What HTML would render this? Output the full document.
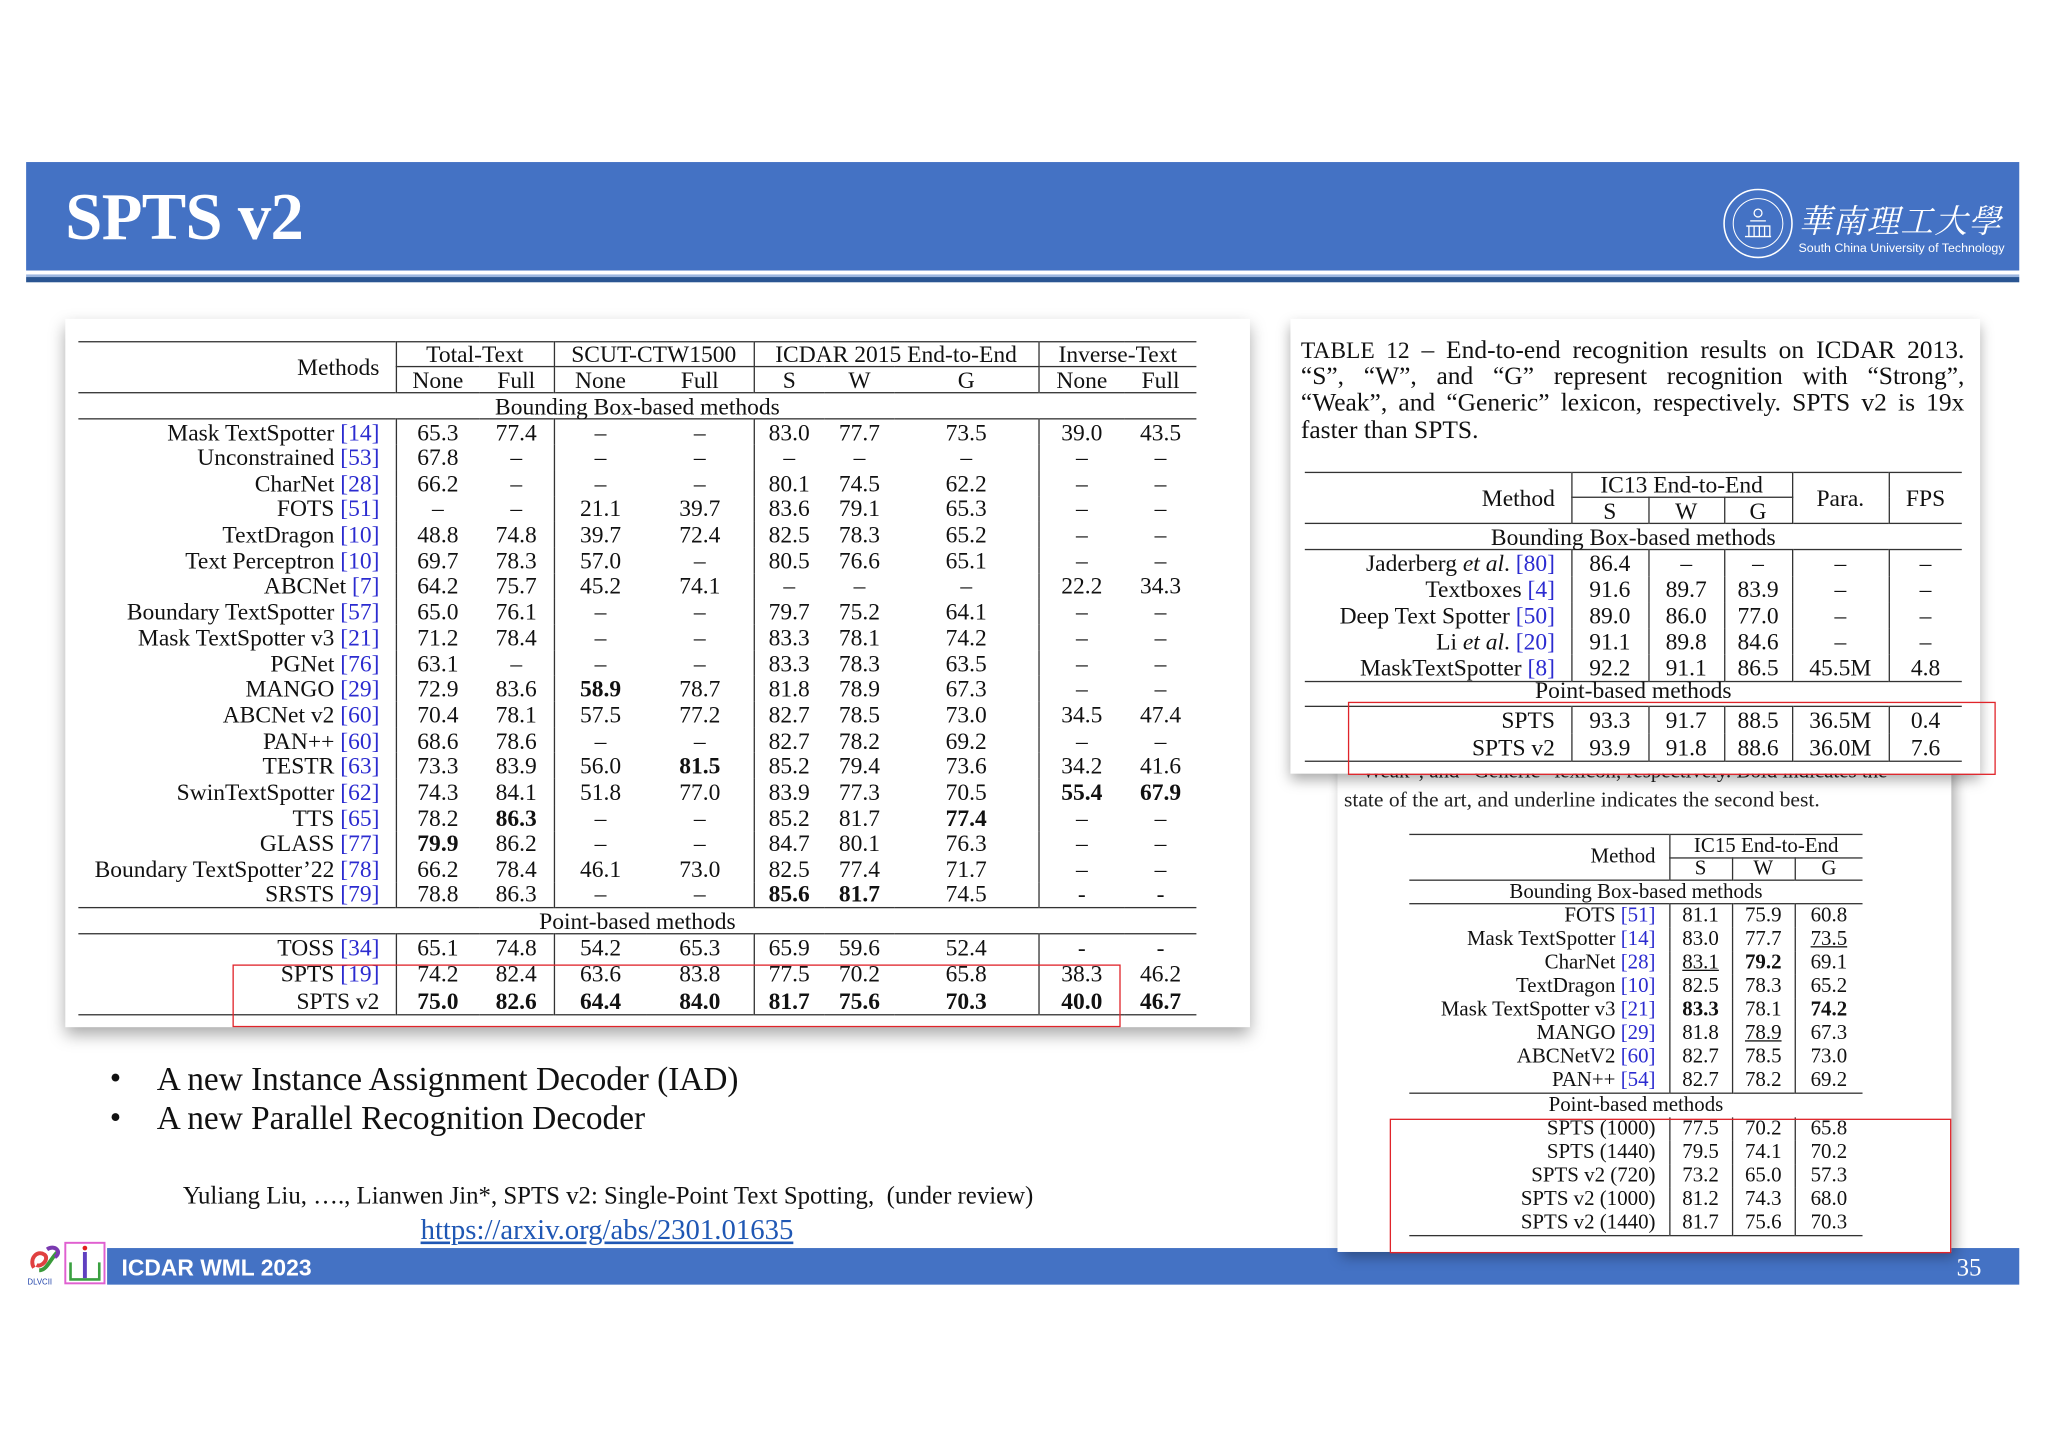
<!DOCTYPE html>
<html><head><meta charset="utf-8">
<style>
html,body{margin:0;padding:0;background:#fff;width:2048px;height:1448px;overflow:hidden}
#s{position:absolute;left:0;top:0;width:1568px;height:1108px;transform:scale(1.30612,1.30686);transform-origin:0 0;font-family:"Liberation Serif",serif;color:#111}
.a{position:absolute}
table{border-collapse:collapse;table-layout:fixed;position:absolute}
td{padding:0;text-align:center;white-space:nowrap;overflow:visible;line-height:1}
td.m{text-align:right;padding-right:12px}
.r{color:#2b2bd0}
.vl{border-right:1px solid #333}
.bt{border-top:1.5px solid #333}
.bb{border-bottom:1.5px solid #333}
.box{position:absolute;border:1.5px solid #e0242a;box-sizing:border-box}
b{font-weight:bold}
u{text-decoration:underline}
.jl{text-align:justify;text-align-last:justify;white-space:nowrap;height:20.5px}
</style></head><body>
<div id="s">
<!-- header -->
<div class="a" style="left:20px;top:124px;width:1526px;height:83px;background:#4472c4"></div>
<div class="a" style="left:20px;top:210px;width:1526px;height:2px;background:#9cb6e0"></div>
<div class="a" style="left:20px;top:212px;width:1526px;height:4px;background:#2a5592"></div>
<div class="a" style="left:50px;top:138px;font-size:51px;font-weight:bold;color:#fff;letter-spacing:-0.5px">SPTS v2</div>
<svg class="a" style="left:1318px;top:143px" width="56" height="56" viewBox="0 0 56 56"><circle cx="28" cy="28" r="26" fill="none" stroke="#fff" stroke-width="1.2"/><circle cx="28" cy="28" r="19" fill="none" stroke="#fff" stroke-width="0.8"/><path d="M18 38h20M19 30h18v8M21 30v8M25 30v8M29 30v8M33 30v8M22 26h12" stroke="#fff" stroke-width="1" fill="none"/><circle cx="28" cy="20" r="3" fill="none" stroke="#fff"/></svg>
<div class="a" style="left:1377px;top:150px;font-family:'Noto Serif CJK SC',serif;font-size:25px;color:#fff;letter-spacing:1px;font-style:italic;white-space:nowrap">華南理工大學</div>
<div class="a" style="left:1377px;top:185px;font-family:'Liberation Sans',sans-serif;font-size:9.5px;color:#fff">South China University of Technology</div>

<!-- left panel -->
<div class="a" style="left:50px;top:244px;width:907px;height:542px;background:#fff;box-shadow:0 6px 12px rgba(0,0,0,0.35)"></div>
<table style="left:60px;top:261px;width:856px;font-size:18px">
<colgroup><col style="width:243px"><col style="width:64px"><col style="width:57px"><col style="width:71px"><col style="width:82px"><col style="width:54px"><col style="width:54px"><col style="width:110px"><col style="width:66px"><col style="width:55px"></colgroup>
<tr class="bt" style="height:19px"><td class="m vl" rowspan="2">Methods</td><td colspan="2" class="vl bb" style="border-bottom-width:1px">Total-Text</td><td colspan="2" class="vl bb" style="border-bottom-width:1px">SCUT-CTW1500</td><td colspan="3" class="vl bb" style="border-bottom-width:1px">ICDAR 2015 End-to-End</td><td colspan="2" class="bb" style="border-bottom-width:1px">Inverse-Text</td></tr>
<tr style="height:20px"><td>None</td><td class="vl">Full</td><td>None</td><td class="vl">Full</td><td>S</td><td>W</td><td class="vl">G</td><td>None</td><td>Full</td></tr>
<tr class="bt bb" style="height:20px"><td colspan="10">Bounding Box-based methods</td></tr>
<tr style="height:19.7px"><td class="m vl">Mask TextSpotter <span class="r">[14]</span></td><td>65.3</td><td class="vl">77.4</td><td>–</td><td class="vl">–</td><td>83.0</td><td>77.7</td><td class="vl">73.5</td><td>39.0</td><td>43.5</td></tr>
<tr style="height:19.7px"><td class="m vl">Unconstrained <span class="r">[53]</span></td><td>67.8</td><td class="vl">–</td><td>–</td><td class="vl">–</td><td>–</td><td>–</td><td class="vl">–</td><td>–</td><td>–</td></tr>
<tr style="height:19.7px"><td class="m vl">CharNet <span class="r">[28]</span></td><td>66.2</td><td class="vl">–</td><td>–</td><td class="vl">–</td><td>80.1</td><td>74.5</td><td class="vl">62.2</td><td>–</td><td>–</td></tr>
<tr style="height:19.7px"><td class="m vl">FOTS <span class="r">[51]</span></td><td>–</td><td class="vl">–</td><td>21.1</td><td class="vl">39.7</td><td>83.6</td><td>79.1</td><td class="vl">65.3</td><td>–</td><td>–</td></tr>
<tr style="height:19.7px"><td class="m vl">TextDragon <span class="r">[10]</span></td><td>48.8</td><td class="vl">74.8</td><td>39.7</td><td class="vl">72.4</td><td>82.5</td><td>78.3</td><td class="vl">65.2</td><td>–</td><td>–</td></tr>
<tr style="height:19.7px"><td class="m vl">Text Perceptron <span class="r">[10]</span></td><td>69.7</td><td class="vl">78.3</td><td>57.0</td><td class="vl">–</td><td>80.5</td><td>76.6</td><td class="vl">65.1</td><td>–</td><td>–</td></tr>
<tr style="height:19.7px"><td class="m vl">ABCNet <span class="r">[7]</span></td><td>64.2</td><td class="vl">75.7</td><td>45.2</td><td class="vl">74.1</td><td>–</td><td>–</td><td class="vl">–</td><td>22.2</td><td>34.3</td></tr>
<tr style="height:19.7px"><td class="m vl">Boundary TextSpotter <span class="r">[57]</span></td><td>65.0</td><td class="vl">76.1</td><td>–</td><td class="vl">–</td><td>79.7</td><td>75.2</td><td class="vl">64.1</td><td>–</td><td>–</td></tr>
<tr style="height:19.7px"><td class="m vl">Mask TextSpotter v3 <span class="r">[21]</span></td><td>71.2</td><td class="vl">78.4</td><td>–</td><td class="vl">–</td><td>83.3</td><td>78.1</td><td class="vl">74.2</td><td>–</td><td>–</td></tr>
<tr style="height:19.7px"><td class="m vl">PGNet <span class="r">[76]</span></td><td>63.1</td><td class="vl">–</td><td>–</td><td class="vl">–</td><td>83.3</td><td>78.3</td><td class="vl">63.5</td><td>–</td><td>–</td></tr>
<tr style="height:19.7px"><td class="m vl">MANGO <span class="r">[29]</span></td><td>72.9</td><td class="vl">83.6</td><td><b>58.9</b></td><td class="vl">78.7</td><td>81.8</td><td>78.9</td><td class="vl">67.3</td><td>–</td><td>–</td></tr>
<tr style="height:19.7px"><td class="m vl">ABCNet v2 <span class="r">[60]</span></td><td>70.4</td><td class="vl">78.1</td><td>57.5</td><td class="vl">77.2</td><td>82.7</td><td>78.5</td><td class="vl">73.0</td><td>34.5</td><td>47.4</td></tr>
<tr style="height:19.7px"><td class="m vl">PAN++ <span class="r">[60]</span></td><td>68.6</td><td class="vl">78.6</td><td>–</td><td class="vl">–</td><td>82.7</td><td>78.2</td><td class="vl">69.2</td><td>–</td><td>–</td></tr>
<tr style="height:19.7px"><td class="m vl">TESTR <span class="r">[63]</span></td><td>73.3</td><td class="vl">83.9</td><td>56.0</td><td class="vl"><b>81.5</b></td><td>85.2</td><td>79.4</td><td class="vl">73.6</td><td>34.2</td><td>41.6</td></tr>
<tr style="height:19.7px"><td class="m vl">SwinTextSpotter <span class="r">[62]</span></td><td>74.3</td><td class="vl">84.1</td><td>51.8</td><td class="vl">77.0</td><td>83.9</td><td>77.3</td><td class="vl">70.5</td><td><b>55.4</b></td><td><b>67.9</b></td></tr>
<tr style="height:19.7px"><td class="m vl">TTS <span class="r">[65]</span></td><td>78.2</td><td class="vl"><b>86.3</b></td><td>–</td><td class="vl">–</td><td>85.2</td><td>81.7</td><td class="vl"><b>77.4</b></td><td>–</td><td>–</td></tr>
<tr style="height:19.7px"><td class="m vl">GLASS <span class="r">[77]</span></td><td><b>79.9</b></td><td class="vl">86.2</td><td>–</td><td class="vl">–</td><td>84.7</td><td>80.1</td><td class="vl">76.3</td><td>–</td><td>–</td></tr>
<tr style="height:19.7px"><td class="m vl">Boundary TextSpotter’22 <span class="r">[78]</span></td><td>66.2</td><td class="vl">78.4</td><td>46.1</td><td class="vl">73.0</td><td>82.5</td><td>77.4</td><td class="vl">71.7</td><td>–</td><td>–</td></tr>
<tr style="height:19.7px"><td class="m vl">SRSTS <span class="r">[79]</span></td><td>78.8</td><td class="vl">86.3</td><td>–</td><td class="vl">–</td><td><b>85.6</b></td><td><b>81.7</b></td><td class="vl">74.5</td><td>-</td><td>-</td></tr>
<tr class="bt bb" style="height:20px"><td colspan="10">Point-based methods</td></tr>
<tr style="height:20.6px"><td class="m vl">TOSS <span class="r">[34]</span></td><td>65.1</td><td class="vl">74.8</td><td>54.2</td><td class="vl">65.3</td><td>65.9</td><td>59.6</td><td class="vl">52.4</td><td>-</td><td>-</td></tr>
<tr style="height:20.6px"><td class="m vl">SPTS <span class="r">[19]</span></td><td>74.2</td><td class="vl">82.4</td><td>63.6</td><td class="vl">83.8</td><td>77.5</td><td>70.2</td><td class="vl">65.8</td><td>38.3</td><td>46.2</td></tr>
<tr class="bb" style="height:20.6px"><td class="m vl">SPTS v2</td><td><b>75.0</b></td><td class="vl"><b>82.6</b></td><td><b>64.4</b></td><td class="vl"><b>84.0</b></td><td><b>81.7</b></td><td><b>75.6</b></td><td class="vl"><b>70.3</b></td><td><b>40.0</b></td><td><b>46.7</b></td></tr>
</table>
<div class="box" style="left:178px;top:738px;width:680px;height:48px"></div>

<!-- bullets -->
<div class="a" style="left:84px;top:811px;font-size:25px;line-height:30px">•<br>•</div>
<div class="a" style="left:120px;top:811px;font-size:25.5px;line-height:30px">A new Instance Assignment Decoder (IAD)<br>A new Parallel Recognition Decoder</div>
<div class="a" style="left:140px;top:905px;font-size:19px;white-space:nowrap">Yuliang Liu, …., Lianwen Jin*, SPTS v2: Single-Point Text Spotting,&nbsp; (under review)</div>
<div class="a" style="left:322px;top:928px;font-size:22px;color:#1f57b4;text-decoration:underline">https://arxiv.org/abs/2301.01635</div>

<!-- footer -->
<div class="a" style="left:82px;top:955px;width:1464px;height:28px;background:#4472c4"></div>
<div class="a" style="left:93px;top:960px;font-family:'Liberation Sans',sans-serif;font-weight:bold;font-size:17.5px;color:#fff">ICDAR WML 2023</div>
<div class="a" style="left:1498px;top:960px;font-size:19px;color:#fff">35</div>
<svg class="a" style="left:20px;top:950px" width="62" height="34" viewBox="0 0 62 34"><path d="M6 20 C2 14 8 6 14 10 C18 13 12 20 8 18" stroke="#e04040" stroke-width="3" fill="none"/><path d="M10 22 C16 22 18 14 24 8" stroke="#3a9a3a" stroke-width="3" fill="none"/><path d="M16 6 C22 2 28 8 22 12" stroke="#7a3ab0" stroke-width="3" fill="none"/><text x="1" y="33" font-size="6" font-family="Liberation Sans" fill="#2244aa">DLVCII</text><rect x="30" y="1" width="30" height="31" fill="#fff" stroke="#e060d0" stroke-width="1.5"/><path d="M34 16v13h22v-13" stroke="#3aa040" stroke-width="2" fill="none"/><path d="M45 8v20" stroke="#6040c0" stroke-width="3"/><circle cx="45" cy="5" r="1.8" fill="#e02020"/></svg>

<!-- right bottom panel -->
<div class="a" style="left:1024px;top:580px;width:470px;height:378px;background:#fff;box-shadow:3px 4px 10px rgba(0,0,0,0.35)"></div>
<div class="a" style="left:1036px;top:582px;font-size:16px;color:#222;white-space:nowrap">“Weak”, and “Generic” lexicon, respectively. Bold indicates the</div>
<div class="a" style="left:1029px;top:602px;font-size:16.5px;color:#222">state of the art, and underline indicates the second best.</div>
<table style="left:1079px;top:638px;width:347px;font-size:16px">
<colgroup><col style="width:199px"><col style="width:48px"><col style="width:48px"><col style="width:52px"></colgroup>
<tr class="bt" style="height:18px"><td class="m vl" rowspan="2" style="padding-right:10px">Method</td><td colspan="3" class="bb" style="border-bottom-width:1px">IC15 End-to-End</td></tr>
<tr style="height:17px"><td class="vl">S</td><td class="vl">W</td><td>G</td></tr>
<tr class="bt bb" style="height:18px"><td colspan="4">Bounding Box-based methods</td></tr>
<tr style="height:18px"><td class="m vl" style="padding-right:10px">FOTS <span class="r">[51]</span></td><td class="vl">81.1</td><td class="vl">75.9</td><td>60.8</td></tr>
<tr style="height:18px"><td class="m vl" style="padding-right:10px">Mask TextSpotter <span class="r">[14]</span></td><td class="vl">83.0</td><td class="vl">77.7</td><td><u>73.5</u></td></tr>
<tr style="height:18px"><td class="m vl" style="padding-right:10px">CharNet <span class="r">[28]</span></td><td class="vl"><u>83.1</u></td><td class="vl"><b>79.2</b></td><td>69.1</td></tr>
<tr style="height:18px"><td class="m vl" style="padding-right:10px">TextDragon <span class="r">[10]</span></td><td class="vl">82.5</td><td class="vl">78.3</td><td>65.2</td></tr>
<tr style="height:18px"><td class="m vl" style="padding-right:10px">Mask TextSpotter v3 <span class="r">[21]</span></td><td class="vl"><b>83.3</b></td><td class="vl">78.1</td><td><b>74.2</b></td></tr>
<tr style="height:18px"><td class="m vl" style="padding-right:10px">MANGO <span class="r">[29]</span></td><td class="vl">81.8</td><td class="vl"><u>78.9</u></td><td>67.3</td></tr>
<tr style="height:18px"><td class="m vl" style="padding-right:10px">ABCNetV2 <span class="r">[60]</span></td><td class="vl">82.7</td><td class="vl">78.5</td><td>73.0</td></tr>
<tr style="height:19px"><td class="m vl" style="padding-right:10px">PAN++ <span class="r">[54]</span></td><td class="vl">82.7</td><td class="vl">78.2</td><td>69.2</td></tr>
<tr class="bt" style="height:18px"><td colspan="4">Point-based methods</td></tr>
<tr style="height:18.2px"><td class="m vl" style="padding-right:10px">SPTS (1000)</td><td class="vl">77.5</td><td class="vl">70.2</td><td>65.8</td></tr>
<tr style="height:18.2px"><td class="m vl" style="padding-right:10px">SPTS (1440)</td><td class="vl">79.5</td><td class="vl">74.1</td><td>70.2</td></tr>
<tr style="height:18.2px"><td class="m vl" style="padding-right:10px">SPTS v2 (720)</td><td class="vl">73.2</td><td class="vl">65.0</td><td>57.3</td></tr>
<tr style="height:18.2px"><td class="m vl" style="padding-right:10px">SPTS v2 (1000)</td><td class="vl">81.2</td><td class="vl">74.3</td><td>68.0</td></tr>
<tr class="bb" style="height:18.2px"><td class="m vl" style="padding-right:10px">SPTS v2 (1440)</td><td class="vl">81.7</td><td class="vl">75.6</td><td>70.3</td></tr>
</table>
<div class="box" style="left:1064px;top:856px;width:430px;height:103px"></div>

<!-- right top panel -->
<div class="a" style="left:988px;top:244px;width:528px;height:348px;background:#fff;box-shadow:0 5px 10px rgba(0,0,0,0.35)"></div>
<div class="a" style="left:996px;top:258px;width:508px;font-size:19.5px;line-height:20.5px;color:#111">
<div class="jl"><span style="font-size:18px">TABLE 12</span> – End-to-end recognition results on ICDAR 2013.</div>
<div class="jl">“S”, “W”, and “G” represent recognition with “Strong”,</div>
<div class="jl">“Weak”, and “Generic” lexicon, respectively. SPTS v2 is 19x</div>
<div style="white-space:nowrap">faster than SPTS.</div>
</div>
<table style="left:999px;top:361px;width:503px;font-size:18px">
<colgroup><col style="width:204px"><col style="width:59px"><col style="width:58px"><col style="width:52px"><col style="width:74px"><col style="width:56px"></colgroup>
<tr class="bt" style="height:19px"><td class="m vl" rowspan="2">Method</td><td colspan="3" class="vl bb" style="border-bottom-width:1px">IC13 End-to-End</td><td class="vl" rowspan="2">Para.</td><td rowspan="2">FPS</td></tr>
<tr style="height:20px"><td class="vl">S</td><td class="vl">W</td><td class="vl">G</td></tr>
<tr class="bt bb" style="height:20px"><td colspan="6">Bounding Box-based methods</td></tr>
<tr style="height:20.2px"><td class="m vl">Jaderberg <i>et al</i>. <span class="r">[80]</span></td><td class="vl">86.4</td><td class="vl">–</td><td class="vl">–</td><td class="vl">–</td><td>–</td></tr>
<tr style="height:20.2px"><td class="m vl">Textboxes <span class="r">[4]</span></td><td class="vl">91.6</td><td class="vl">89.7</td><td class="vl">83.9</td><td class="vl">–</td><td>–</td></tr>
<tr style="height:20.2px"><td class="m vl">Deep Text Spotter <span class="r">[50]</span></td><td class="vl">89.0</td><td class="vl">86.0</td><td class="vl">77.0</td><td class="vl">–</td><td>–</td></tr>
<tr style="height:20.2px"><td class="m vl">Li <i>et al</i>. <span class="r">[20]</span></td><td class="vl">91.1</td><td class="vl">89.8</td><td class="vl">84.6</td><td class="vl">–</td><td>–</td></tr>
<tr style="height:20.2px"><td class="m vl">MaskTextSpotter <span class="r">[8]</span></td><td class="vl">92.2</td><td class="vl">91.1</td><td class="vl">86.5</td><td class="vl">45.5M</td><td>4.8</td></tr>
<tr class="bt bb" style="height:19px"><td colspan="6" style="line-height:12px;vertical-align:top">Point-based methods</td></tr>
<tr style="height:21px"><td class="m vl">SPTS</td><td class="vl">93.3</td><td class="vl">91.7</td><td class="vl">88.5</td><td class="vl">36.5M</td><td>0.4</td></tr>
<tr class="bb" style="height:21px"><td class="m vl">SPTS v2</td><td class="vl">93.9</td><td class="vl">91.8</td><td class="vl">88.6</td><td class="vl">36.0M</td><td>7.6</td></tr>
</table>
<div class="box" style="left:1032px;top:537px;width:496px;height:56px"></div>
</div>
</body></html>
